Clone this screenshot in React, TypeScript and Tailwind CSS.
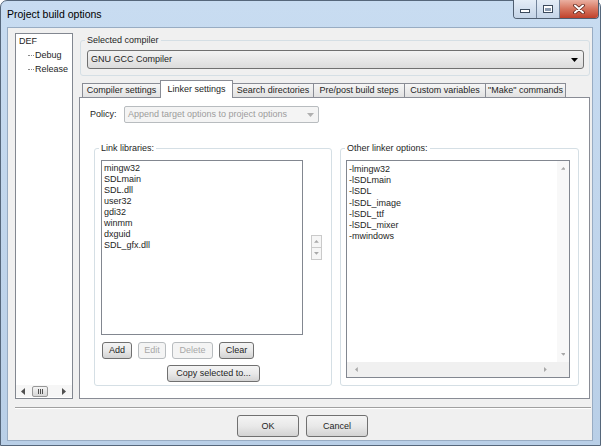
import React from "react";
import clsx from "clsx";

type Dir = "up" | "down" | "left" | "right";

function Arrow({ dir, c, s = 1 }: { dir: Dir; c: string; s?: number }) {
  const vert = dir === "up" || dir === "down";
  const w = (vert ? 7 : 4) * s;
  const h = (vert ? 4 : 7) * s;
  const pts = {
    up: `0,${h} ${w},${h} ${w / 2},0`,
    down: `0,0 ${w},0 ${w / 2},${h}`,
    left: `${w},0 ${w},${h} 0,${h / 2}`,
    right: `0,0 0,${h} ${w},${h / 2}`,
  }[dir];
  return (
    <svg width={w} height={h} viewBox={`0 0 ${w} ${h}`} className="block">
      <polygon points={pts} fill={c} />
    </svg>
  );
}

function Button({
  className,
  children,
  disabled,
}: {
  className?: string;
  children: React.ReactNode;
  disabled?: boolean;
}) {
  return (
    <div
      className={clsx(
        "flex items-center justify-center rounded-[3px] border",
        disabled
          ? "border-[#b8bcbf] bg-[#f4f4f4] text-[#a8a8a8]"
          : "border-[#707070] bg-linear-to-b from-[#f4f4f4] via-[#e9e9e9] to-[#d3d3d3] text-[#1e1e1e]",
        className
      )}
    >
      {children}
    </div>
  );
}

const tabs: { label: string; w: string; sel?: boolean }[] = [
  { label: "Compiler settings", w: "w-[79px]" },
  { label: "Linker settings", w: "w-[73px]", sel: true },
  { label: "Search directories", w: "w-[82px]" },
  { label: "Pre/post build steps", w: "w-[92px]" },
  { label: "Custom variables", w: "w-[82px]" },
  { label: "\"Make\" commands", w: "w-[81px]" },
];

const libs = ["mingw32", "SDLmain", "SDL.dll", "user32", "gdi32", "winmm", "dxguid", "SDL_gfx.dll"];
const opts = ["-lmingw32", "-lSDLmain", "-lSDL", "-lSDL_image", "-lSDL_ttf", "-lSDL_mixer", "-mwindows"];

export default function App() {
  return (
    <div className="w-[605px] h-[447px] bg-white overflow-hidden font-['Liberation_Sans',Arial,sans-serif] text-[9px] leading-[11px] text-[#1e1e1e]">
      <div className="w-[601px] h-[446px] rounded-t-[7px] border border-[#56677b] bg-linear-to-b from-[#c8dcf1] to-[#b9cfe7] flex flex-col">
        {/* Title bar */}
        <div className="h-[26px] shrink-0 flex items-start justify-between">
          <div className="h-[26px] pl-[6px] flex items-center text-[10.5px] text-black">Project build options</div>
          <div className="-mt-px mr-px h-[19px] flex rounded-b-[4px] border border-t-0 border-[#4f5e70] overflow-hidden">
            <div className="w-[23px] border-r border-[#71839a] bg-linear-to-b from-[#e4edf7] to-[#c4d4e7] flex items-end justify-center pb-[5px]">
              <svg width="10" height="4" className="block">
                <rect x="0.5" y="0.5" width="9" height="3" fill="#ffffff" stroke="#3b4a5c" />
              </svg>
            </div>
            <div className="w-[23px] border-r border-[#71839a] bg-linear-to-b from-[#e4edf7] to-[#c4d4e7] flex items-center justify-center">
              <svg width="10" height="8" className="block">
                <rect x="0" y="0" width="10" height="8" fill="#3b4a5c" />
                <rect x="1" y="1" width="8" height="6" fill="#ffffff" />
                <rect x="2" y="3" width="6" height="3" fill="#8a9bb0" />
              </svg>
            </div>
            <div className="w-[38px] bg-linear-to-b from-[#eab0a1] via-[#d5745e] to-[#c0402a] flex items-center justify-center">
              <svg width="12" height="10" className="block">
                <path d="M2 1.5 L10 8.5 M10 1.5 L2 8.5" stroke="#5a231a" strokeWidth="3.6" strokeLinecap="round" />
                <path d="M2 1.5 L10 8.5 M10 1.5 L2 8.5" stroke="#ffffff" strokeWidth="2" strokeLinecap="round" />
              </svg>
            </div>
          </div>
        </div>

        {/* Client area */}
        <div className="ml-[6px] mr-[7px] mb-[4px] flex-1 border border-[#98acc3] bg-[#f0f0f0] flex flex-col">
          <div className="flex items-start">
            {/* Tree */}
            <div className="ml-[7px] mt-[5px] w-[58px] h-[366px] border border-[#828790] bg-white flex flex-col">
              <div className="flex-1">
                <div className="h-[14px] leading-[14px] pl-[3px]">DEF</div>
                <div className="h-[14px] pl-[12px] flex items-center">
                  <span className="w-[6px] mr-[1px] border-t border-dotted border-[#8a8a8a]" />
                  <span>Debug</span>
                </div>
                <div className="h-[14px] pl-[12px] flex items-center">
                  <span className="w-[6px] mr-[1px] border-t border-dotted border-[#8a8a8a]" />
                  <span>Release</span>
                </div>
              </div>
              <div className="h-[12px] mb-[1px] flex items-center bg-[#f6f6f6]">
                <div className="w-[14px] flex justify-center">
                  <Arrow dir="left" c="#505050" />
                </div>
                <div className="ml-[2px] w-[16px] h-[11px] rounded-[2px] border border-[#989898] bg-linear-to-b from-[#f5f5f5] to-[#d6d6d6] flex items-center justify-center gap-[1px]">
                  <span className="w-px h-[5px] bg-[#505050]" />
                  <span className="w-px h-[5px] bg-[#505050]" />
                  <span className="w-px h-[5px] bg-[#505050]" />
                </div>
                <div className="flex-1" />
                <div className="w-[14px] pr-[3px] flex justify-center">
                  <Arrow dir="right" c="#505050" />
                </div>
              </div>
            </div>

            {/* Right column */}
            <div className="ml-[6px] w-[511px] flex flex-col">
              <fieldset className="ml-px mt-[7px] w-[510px] border border-[#d5dfe5] rounded-[3px] pb-[6px]">
                <legend className="ml-[4px] px-[2px] leading-[11px]">Selected compiler</legend>
                <div className="pt-[4px] pl-[6px]">
                  <div className="w-[497px] h-[19px] border border-[#707070] rounded-[3px] bg-linear-to-b from-[#f3f3f3] to-[#dcdcdc] flex items-center justify-between pl-[3px] pr-[5px]">
                    <span>GNU GCC Compiler</span>
                    <Arrow dir="down" c="#000000" />
                  </div>
                </div>
              </fieldset>

              {/* Tabs */}
              <div className="mt-[4px] h-[17px] pl-[3px] flex items-end">
                {tabs.map((t, i) =>
                  t.sel ? (
                    <div
                      key={t.label}
                      className={clsx(
                        t.w,
                        "relative z-10 -ml-px h-[18px] -mb-px border border-b-0 border-[#898c95] bg-white flex items-center justify-center pb-[1px]"
                      )}
                    >
                      {t.label}
                    </div>
                  ) : (
                    <div
                      key={t.label}
                      className={clsx(
                        t.w,
                        i > 0 && "-ml-px",
                        "h-[14px] border border-b-0 border-[#898c95] bg-linear-to-b from-[#f6f6f6] to-[#e2e2e2] flex items-center justify-center"
                      )}
                    >
                      {t.label}
                    </div>
                  )
                )}
              </div>

              {/* Tab panel */}
              <div className="w-[511px] h-[302px] border border-[#898c95] bg-white">
                <div className="mt-[8px] pl-[10px] flex items-center">
                  <span className="w-[34px]">Policy:</span>
                  <div className="w-[195px] h-[17px] border border-[#b8bcbf] rounded-[2px] bg-[#f4f4f4] text-[#9c9c9c] flex items-center justify-between pl-[3px] pr-[4px]">
                    <span>Append target options to project options</span>
                    <Arrow dir="down" c="#b0b0b0" />
                  </div>
                </div>

                <div className="mt-[20px] pl-[14px] flex gap-[8px]">
                  {/* Link libraries */}
                  <fieldset className="w-[238px] h-[243px] border border-[#d5dfe5] rounded-[3px]">
                    <legend className="ml-[4px] px-[2px] leading-[11px]">Link libraries:</legend>
                    <div className="pl-[6px] pt-[6px]">
                      <div className="flex items-center">
                        <div className="w-[202px] h-[175px] border border-[#828790] bg-white pl-[2px] pt-[2px]">
                          {libs.map((l) => (
                            <div key={l} className="h-[11px] leading-[11px]">
                              {l}
                            </div>
                          ))}
                        </div>
                        <div className="ml-[8px] w-[11px] flex flex-col">
                          <div className="h-[13px] border border-[#cacaca] bg-[#f6f6f6] flex items-center justify-center">
                            <Arrow dir="up" c="#a8a8a8" s={0.7} />
                          </div>
                          <div className="-mt-px h-[13px] border border-[#cacaca] bg-[#f6f6f6] flex items-center justify-center">
                            <Arrow dir="down" c="#a8a8a8" s={0.7} />
                          </div>
                        </div>
                      </div>
                      <div className="mt-[7px] ml-px flex gap-[6px]">
                        <Button className="w-[30px] h-[17px]">Add</Button>
                        <Button className="w-[28px] h-[17px]" disabled>
                          Edit
                        </Button>
                        <Button className="w-[41px] h-[17px]" disabled>
                          Delete
                        </Button>
                        <Button className="w-[35px] h-[17px]">Clear</Button>
                      </div>
                      <Button className="mt-[6px] ml-[66px] w-[93px] h-[17px]">Copy selected to...</Button>
                    </div>
                  </fieldset>

                  {/* Other linker options */}
                  <fieldset className="w-[239px] h-[243px] border border-[#d5dfe5] rounded-[3px]">
                    <legend className="ml-[4px] px-[2px] leading-[11px]">Other linker options:</legend>
                    <div className="pl-[5px] pt-[6px]">
                      <div className="w-[224px] h-[218px] border border-[#828790] bg-white flex flex-col">
                        <div className="flex-1 min-h-0 flex">
                          <div className="flex-1 pl-[2px] pt-[3px]">
                            {opts.map((o) => (
                              <div key={o} className="h-[11.2px] leading-[11px]">
                                {o}
                              </div>
                            ))}
                          </div>
                          <div className="w-[12px] bg-[#f8f8f8] flex flex-col items-center justify-between py-[6px]">
                            <Arrow dir="up" c="#a8a8a8" s={0.7} />
                            <Arrow dir="down" c="#a8a8a8" s={0.7} />
                          </div>
                        </div>
                        <div className="h-[15px] flex">
                          <div className="flex-1 bg-[#f0f0f0] flex items-center justify-between pl-[8px] pr-[10px]">
                            <Arrow dir="left" c="#a8a8a8" s={0.7} />
                            <Arrow dir="right" c="#a8a8a8" s={0.7} />
                          </div>
                          <div className="w-[12px] bg-[#f0f0f0]" />
                        </div>
                      </div>
                    </div>
                  </fieldset>
                </div>
              </div>
            </div>
          </div>

          {/* Separator */}
          <div className="mt-[8px] ml-[7px] w-[576px] border-t border-b border-t-[#a0a0a0] border-b-white" />

          {/* Dialog buttons */}
          <div className="mt-[6px] pl-[229px] flex gap-[7px]">
            <Button className="w-[62px] h-[22px]">OK</Button>
            <Button className="w-[62px] h-[22px]">Cancel</Button>
          </div>
        </div>
      </div>
    </div>
  );
}
